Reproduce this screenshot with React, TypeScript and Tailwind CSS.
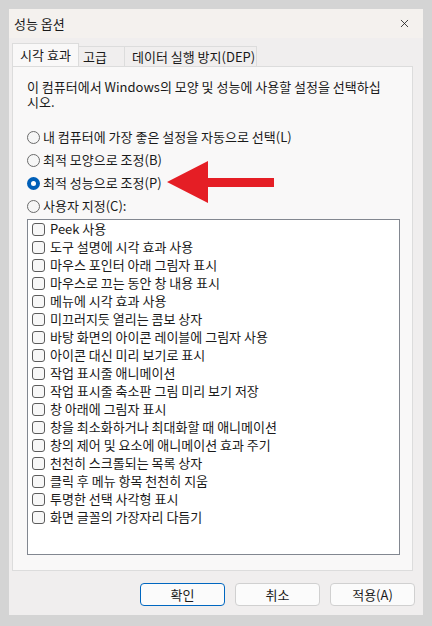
import { X } from "lucide-react";

const font = { fontFamily: '"Noto Sans CJK KR", "Noto Sans", sans-serif' };

const radios = [
  { label: "내 컴퓨터에 가장 좋은 설정을 자동으로 선택(L)", checked: false },
  { label: "최적 모양으로 조정(B)", checked: false },
  { label: "최적 성능으로 조정(P)", checked: true },
  { label: "사용자 지정(C):", checked: false },
];

const options = [
  "Peek 사용",
  "도구 설명에 시각 효과 사용",
  "마우스 포인터 아래 그림자 표시",
  "마우스로 끄는 동안 창 내용 표시",
  "메뉴에 시각 효과 사용",
  "미끄러지듯 열리는 콤보 상자",
  "바탕 화면의 아이콘 레이블에 그림자 사용",
  "아이콘 대신 미리 보기로 표시",
  "작업 표시줄 애니메이션",
  "작업 표시줄 축소판 그림 미리 보기 저장",
  "창 아래에 그림자 표시",
  "창을 최소화하거나 최대화할 때 애니메이션",
  "창의 제어 및 요소에 애니메이션 효과 주기",
  "천천히 스크롤되는 목록 상자",
  "클릭 후 메뉴 항목 천천히 지움",
  "투명한 선택 사각형 표시",
  "화면 글꼴의 가장자리 다듬기",
];

function Radio({ checked }: { checked: boolean }) {
  return checked ? (
    <span className="flex h-[13px] w-[13px] shrink-0 items-center justify-center rounded-full bg-[#005fb8]">
      <span className="h-[5px] w-[5px] rounded-full bg-white" />
    </span>
  ) : (
    <span className="h-[13px] w-[13px] shrink-0 rounded-full border border-[#6b6b6b] bg-[#f6f6f6]" />
  );
}

export default function App() {
  return (
    <div className="h-[626px] w-[432px] bg-[#d4d4d4] pl-[9px] pt-[9px] text-[13px] text-[#1a1a1a]" style={font}>
      <div className="flex h-[606px] w-[414px] flex-col bg-[#f0eeee]">
        <div className="flex h-[29px] items-center justify-between bg-[#f4f1ee] pl-[5px] pr-[12px]">
          <span>성능 옵션</span>
          <X className="h-[13px] w-[13px] text-[#1a1a1a]" strokeWidth={1.5} />
        </div>

        <div className="ml-[3px] mt-[6px] flex h-[22px] items-end">
          <div className="relative z-10 flex h-[23px] w-[67px] items-center justify-center border border-b-0 border-[#dcdcdc] bg-[#f9f8f8]">
            시각 효과
          </div>
          <div className="flex h-[20px] w-[46px] items-center border border-b-0 border-l-0 border-[#dcdcdc] bg-[#f0eeee] pl-[4px]">
            고급
          </div>
          <div className="flex h-[20px] w-[132px] items-center border border-b-0 border-l-0 border-[#dcdcdc] bg-[#f0eeee] pl-[7px]">
            데이터 실행 방지(DEP)
          </div>
        </div>

        <div className="relative mx-[3px] flex h-[505px] w-[401px] flex-col border border-[#dcdcdc] bg-[#f9f8f8] px-[14px] pt-[12px]">
          <p className="leading-[15px]">
            <span className="whitespace-nowrap">이 컴퓨터에서 Windows의 모양 및 성능에 사용할 설정을 선택하십</span>
            <br />
            시오.
          </p>

          <div className="mt-[19px] flex flex-col gap-[5px]">
            {radios.map((r) => (
              <div key={r.label} className="flex h-[18px] items-center gap-[3px]">
                <Radio checked={r.checked} />
                <span>{r.label}</span>
              </div>
            ))}
          </div>

          <div className="mt-[4px] h-[336px] w-[373px] border border-[#828790] bg-white pl-[4px]">
            {options.map((o) => (
              <div key={o} className="flex h-[18px] items-center gap-[5px]">
                <span className="h-[13px] w-[13px] shrink-0 rounded-[3px] border border-[#5c5c5c] bg-[#f7f7f7]" />
                <span>{o}</span>
              </div>
            ))}
          </div>

          <svg className="absolute left-[154px] top-[93px]" width="108" height="44" viewBox="0 0 108 44">
            <polygon points="0,22 41,1 41,18 107,18 107,27 41,27 41,43" fill="#e51e25" />
          </svg>
        </div>

        <div className="mr-[8px] mt-[12px] flex justify-end gap-[10px]">
          <button className="h-[23px] w-[85px] rounded-[4px] border border-[#0067c0] bg-[#fbfbfb]">확인</button>
          <button className="h-[23px] w-[85px] rounded-[4px] border border-[#d0d0d0] bg-[#fbfbfb]">취소</button>
          <button className="h-[23px] w-[85px] rounded-[4px] border border-[#d0d0d0] bg-[#fbfbfb]">적용(A)</button>
        </div>
      </div>
    </div>
  );
}
